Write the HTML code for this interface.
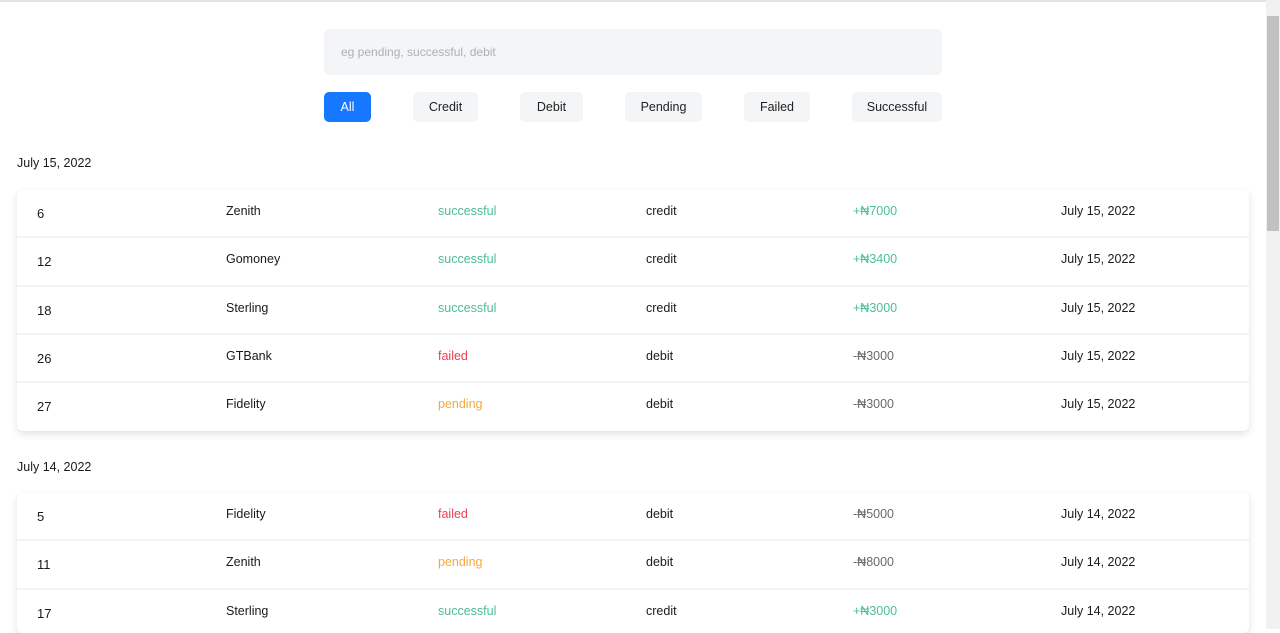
<!DOCTYPE html>
<html><head><meta charset="utf-8"><style>
*{box-sizing:border-box;margin:0;padding:0}
html,body{width:1280px;height:629px;overflow:hidden;background:#fff;font-family:"Liberation Sans",sans-serif;color:#1a1a1a}
.top{position:absolute;left:0;top:0;width:1266px;height:2px;background:#e4e4e4}
.search{position:absolute;left:324px;top:29px;width:618px;height:46px;background:#f4f5f7;border-radius:6px;font-size:12px;color:#aab0b8;padding:16px 0 0 17px}
.btn{position:absolute;top:92px;height:30px;background:#f4f5f7;border-radius:5px;font-size:12.5px;text-align:center;line-height:30px;color:#222}
.btn.on{background:#1677ff;color:#fff}
.h{position:absolute;left:17px;font-size:12.5px}
.card{position:absolute;left:17px;width:1232px;background:#fff;border-radius:6px;box-shadow:0 3px 8px rgba(0,0,0,.12);overflow:hidden}
.row{position:relative;height:48.3px;border-bottom:2px solid #f3f3f3;font-size:12.5px}
.row:last-child{border-bottom:none}
.row span{position:absolute;top:14px}
.c1{left:20px;font-size:13px;top:16px!important}
.c2{left:209px}.c3{left:421px}.c4{left:629px}.c5{left:836px}.c6{left:1044px}
.g{color:#4cbf92}.r{color:#f0404d}.o{color:#f6a93b}.m{color:#6a6a6a}
.sb{position:absolute;left:1266px;top:0;width:14px;height:629px;background:#f1f1f1}
.th{position:absolute;left:1267px;top:16px;width:12px;height:215px;background:#c1c1c1}
</style></head><body>
<div class="top"></div>
<div class="search">eg pending, successful, debit</div>
<div class="btn on" style="left:324px;width:47px">All</div>
<div class="btn" style="left:413px;width:65px">Credit</div>
<div class="btn" style="left:520px;width:63px">Debit</div>
<div class="btn" style="left:625px;width:77px">Pending</div>
<div class="btn" style="left:744px;width:66px">Failed</div>
<div class="btn" style="left:852px;width:90px">Successful</div>
<div class="h" style="top:156px">July 15, 2022</div>
<div class="card" style="top:190px">
<div class="row"><span class="c1">6</span><span class="c2">Zenith</span><span class="c3 g">successful</span><span class="c4">credit</span><span class="c5 g">+₦7000</span><span class="c6">July 15, 2022</span></div>
<div class="row"><span class="c1">12</span><span class="c2">Gomoney</span><span class="c3 g">successful</span><span class="c4">credit</span><span class="c5 g">+₦3400</span><span class="c6">July 15, 2022</span></div>
<div class="row"><span class="c1">18</span><span class="c2">Sterling</span><span class="c3 g">successful</span><span class="c4">credit</span><span class="c5 g">+₦3000</span><span class="c6">July 15, 2022</span></div>
<div class="row"><span class="c1">26</span><span class="c2">GTBank</span><span class="c3 r">failed</span><span class="c4">debit</span><span class="c5 m">-₦3000</span><span class="c6">July 15, 2022</span></div>
<div class="row"><span class="c1">27</span><span class="c2">Fidelity</span><span class="c3 o">pending</span><span class="c4">debit</span><span class="c5 m">-₦3000</span><span class="c6">July 15, 2022</span></div>
</div>
<div class="h" style="top:460px">July 14, 2022</div>
<div class="card" style="top:493px;height:140px">
<div class="row"><span class="c1">5</span><span class="c2">Fidelity</span><span class="c3 r">failed</span><span class="c4">debit</span><span class="c5 m">-₦5000</span><span class="c6">July 14, 2022</span></div>
<div class="row"><span class="c1">11</span><span class="c2">Zenith</span><span class="c3 o">pending</span><span class="c4">debit</span><span class="c5 m">-₦8000</span><span class="c6">July 14, 2022</span></div>
<div class="row"><span class="c1">17</span><span class="c2">Sterling</span><span class="c3 g">successful</span><span class="c4">credit</span><span class="c5 g">+₦3000</span><span class="c6">July 14, 2022</span></div>
</div>
<div class="sb"></div><div class="th"></div>
</body></html>
